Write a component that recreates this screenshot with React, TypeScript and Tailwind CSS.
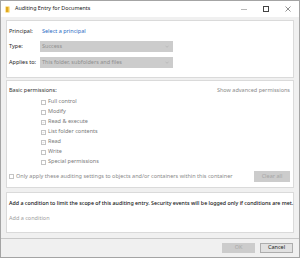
import React from 'react';

const PERMS = [
  { label: 'Full control', checked: false },
  { label: 'Modify', checked: false },
  { label: 'Read & execute', checked: true },
  { label: 'List folder contents', checked: true },
  { label: 'Read', checked: true },
  { label: 'Write', checked: false },
  { label: 'Special permissions', checked: false },
];

const Box = ({ checked }: { checked: boolean }) => (
  <span className="w-[5px] h-[5px] border-[0.5px] border-[#c4c4c4] bg-white flex items-center justify-center shrink-0">
    {checked && (
      <svg width="5" height="5" viewBox="0 0 10 10">
        <path d="M2 5.2 L4 7.2 L8.2 2.6" fill="none" stroke="#a5a5a5" strokeWidth="1.3" />
      </svg>
    )}
  </span>
);

const Select = ({ value }: { value: string }) => (
  <div className="w-[133px] h-[11px] bg-[#cccccc] flex items-center justify-between pl-[2px] pr-[4px] text-[#8f8f8f]">
    <span>{value}</span>
    <svg width="4" height="3" viewBox="0 0 8 5">
      <path d="M1 1 L4 4 L7 1" fill="none" stroke="#a8a8a8" strokeWidth="1" />
    </svg>
  </div>
);

export default function App() {
  return (
    <div
      className="w-[300px] h-[258px] border border-[#a4a4a4] bg-[#f0f0f0] flex flex-col text-[5.5px] leading-none text-[#1e1e1e]"
      style={{ fontFamily: '"Noto Sans", "Open Sans", sans-serif' }}
    >
      {/* Title bar */}
      <div className="h-[16px] bg-white flex items-center shrink-0">
        <svg className="ml-[4px]" width="6" height="7" viewBox="0 0 6 7">
          <rect x="0.5" y="0.5" width="4" height="6" fill="#f5c94a" />
          <rect x="1" y="1" width="2" height="5" fill="#e0a820" />
        </svg>
        <span className="ml-[4px] text-[5.4px] text-[#1a1a1a]">Auditing Entry for Documents</span>
        <div className="ml-auto flex items-center h-full">
          <div className="w-[22px] h-full flex items-center justify-center">
            <span className="w-[6px] h-[0.5px] bg-[#b8b8b8]" />
          </div>
          <div className="w-[22px] h-full flex items-center justify-center">
            <span className="w-[6px] h-[6px] border-[0.7px] border-[#444]" />
          </div>
          <div className="w-[22px] h-full flex items-center justify-center">
            <svg width="6" height="6" viewBox="0 0 6 6">
              <path d="M0.5 0.5 L5.5 5.5 M5.5 0.5 L0.5 5.5" stroke="#444" strokeWidth="0.6" />
            </svg>
          </div>
        </div>
      </div>

      {/* Body */}
      <div className="flex-1 flex flex-col pt-[3px] px-[5px]">
        <div className="h-[58px] bg-white border border-[#dadada] pt-[6px] pl-[2px] flex flex-col">
          <div className="h-[10px] flex items-center">
            <span className="w-[31px]">Principal:</span>
            <span className="ml-[2px] text-[#2b6cc4]">Select a principal</span>
          </div>
          <div className="h-[11px] mt-[4px] flex items-center">
            <span className="w-[31px]">Type:</span>
            <Select value="Success" />
          </div>
          <div className="h-[11px] mt-[5px] flex items-center">
            <span className="w-[31px]">Applies to:</span>
            <Select value="This folder, subfolders and files" />
          </div>
        </div>

        <div className="h-[108px] mt-[2px] bg-white border border-[#dadada] pt-[5px] pl-[2px] pr-[3px] flex flex-col">
          <div className="h-[10px] flex items-center justify-between">
            <span className="text-[#333]">Basic permissions:</span>
            <span className="text-[#8a8a8a]">Show advanced permissions</span>
          </div>
          <div className="mt-[1px] pl-[32px] flex flex-col">
            {PERMS.map((p) => (
              <div key={p.label} className="h-[10px] flex items-center gap-[2px] text-[#7a7a7a]">
                <Box checked={p.checked} />
                <span>{p.label}</span>
              </div>
            ))}
          </div>
          <div className="h-[11px] mt-[4px] flex items-center">
            <Box checked={false} />
            <span className="ml-[2px] text-[#8a8a8a]">
              Only apply these auditing settings to objects and/or containers within this container
            </span>
            <div className="ml-auto w-[36px] h-[11px] bg-[#cccccc] flex items-center justify-center text-[#a5a5a5]">
              Clear all
            </div>
          </div>
        </div>

        <div className="h-[41px] mt-[4px] bg-white border border-[#dadada] pt-[6px] pl-[2px] flex flex-col">
          <div className="h-[10px] flex items-center font-medium text-[5.3px] text-[#111] whitespace-nowrap">
            Add a condition to limit the scope of this auditing entry. Security events will be logged only if conditions are met.
          </div>
          <div className="h-[10px] mt-[5px] flex items-center text-[#a0a0a0]">Add a condition</div>
        </div>
      </div>

      {/* Footer */}
      <div className="h-[19px] mt-[5px] border-t border-[#c8c8c8] flex items-center justify-end gap-[5px] pr-[6px] shrink-0">
        <div className="w-[33px] h-[10px] bg-[#cccccc] flex items-center justify-center text-[#a8a8a8]">OK</div>
        <div className="w-[33px] h-[10px] bg-[#e1e1e1] border-[0.5px] border-[#adadad] flex items-center justify-center text-[#1a1a1a]">
          Cancel
        </div>
      </div>
    </div>
  );
}
